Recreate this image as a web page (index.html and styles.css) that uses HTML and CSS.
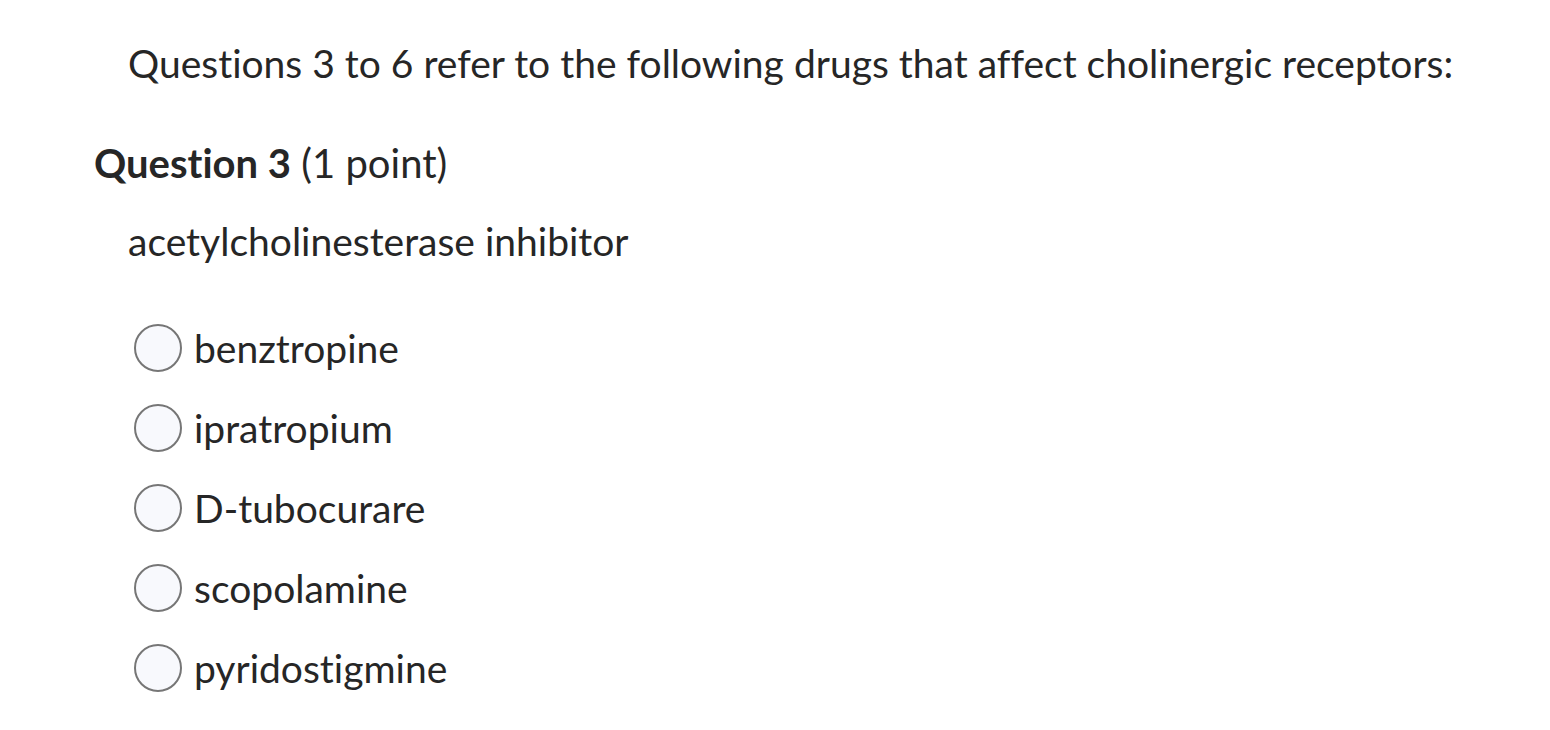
FILE: index.html
```html
<!DOCTYPE html>
<html>
<head>
<meta charset="utf-8">
<link rel="stylesheet" href="styles.css">
</head>
<body>
<div class="page">
  <p class="intro">Questions 3 to 6 refer to the following drugs that affect cholinergic receptors:</p>
  <h2 class="qhead"><strong>Question 3</strong> <span class="pts">(1 point)</span></h2>
  <p class="qtext">acetylcholinesterase inhibitor</p>
  <ul class="options">
    <li class="opt"><span class="radio"></span><span class="label">benztropine</span></li>
    <li class="opt"><span class="radio"></span><span class="label">ipratropium</span></li>
    <li class="opt"><span class="radio"></span><span class="label">D-tubocurare</span></li>
    <li class="opt"><span class="radio"></span><span class="label">scopolamine</span></li>
    <li class="opt"><span class="radio"></span><span class="label">pyridostigmine</span></li>
  </ul>
</div>
</body>
</html>
```
FILE: styles.css
```css
html, body {
  margin: 0;
  padding: 0;
  background: #fff;
}
body {
  font-family: Lato, "Noto Sans", sans-serif;
  color: #262626;
  font-size: 39px;
  font-variant-ligatures: none;
  font-feature-settings: "liga" 0, "clig" 0;
}
.page {
  padding: 37px 0 0 94px;
}
.intro {
  margin: 0;
  padding-left: 34px;
  line-height: 52px;
}
.qhead {
  margin: 48px 0 0 0;
  font-size: 40px;
  font-weight: normal;
  line-height: 52px;
}
.qhead strong {
  font-weight: bold;
}
.qtext {
  margin: 26px 0 0 34px;
  line-height: 52px;
}
.options {
  list-style: none;
  margin: 41px 0 0 40px;
  padding: 0;
}
.opt {
  display: flex;
  align-items: center;
  height: 80px;
}
.radio {
  width: 44px;
  height: 44px;
  border: 2px solid #767676;
  border-radius: 50%;
  background: #f8f9fd;
  flex: none;
}
.label {
  margin-left: 12px;
}
```
